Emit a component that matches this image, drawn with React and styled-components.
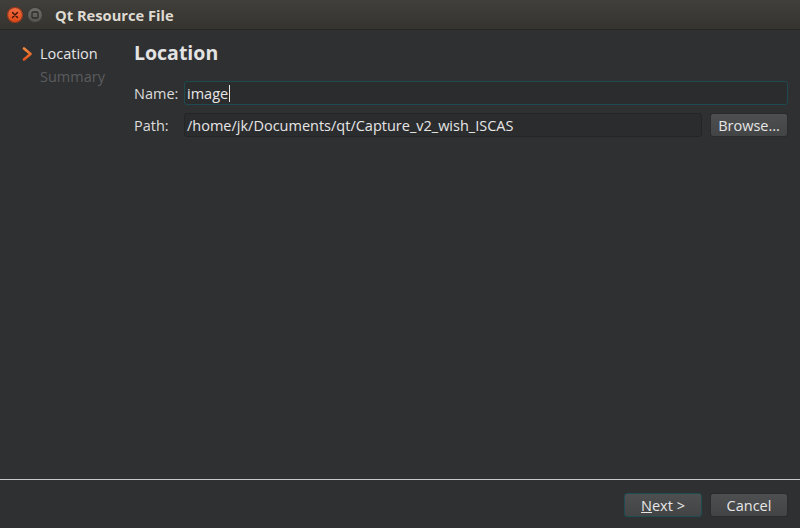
import styled, { createGlobalStyle } from "styled-components";

const Global = createGlobalStyle`
  html, body { margin: 0; padding: 0; background: #2f3032; }
  body { font-family: "Open Sans", "DejaVu Sans", sans-serif; }
`;

const Window = styled.div`
  width: 800px;
  height: 528px;
  display: flex;
  flex-direction: column;
  background: #2f3032;
  color: #dcdcdc;
  font-size: 14.5px;
`;

const TitleBar = styled.div`
  height: 29px;
  flex: none;
  display: flex;
  align-items: center;
  padding-left: 8px;
  background: linear-gradient(#403f3b, #35342f);
  border-bottom: 1px solid #262624;
`;

const WinButton = styled.div`
  width: 14px;
  height: 14px;
  border-radius: 50%;
  margin-right: 6px;
  display: flex;
  align-items: center;
  justify-content: center;
  background: ${(p) => (p.$close ? "linear-gradient(#f36c40, #df4a16)" : "linear-gradient(#6d6c68, #55544f)")};
  box-shadow: 0 0 0 1px ${(p) => (p.$close ? "#a8391a" : "#3a3935")};
`;

const Title = styled.div`
  margin-left: 7px;
  font-weight: 700;
  font-size: 14.7px;
  color: #dfdbd2;
`;

const Body = styled.div`
  flex: 1;
  display: flex;
  padding: 10px 12px 0 22px;
`;

const Sidebar = styled.div`
  width: 112px;
  flex: none;
  display: flex;
  flex-direction: column;
  gap: 4px;
  padding-top: 4px;
`;

const Step = styled.div`
  display: flex;
  align-items: center;
  height: 19px;
  color: ${(p) => (p.$active ? "#e6e6e6" : "#5b5c5e")};
  font-size: 14.5px;
`;

const Marker = styled.span`
  width: 18px;
  display: inline-flex;
  align-items: center;
`;

const Content = styled.div`
  flex: 1;
  display: flex;
  flex-direction: column;
`;

const Heading = styled.div`
  font-size: 19.5px;
  font-weight: 700;
  color: #e3e3e3;
  height: 26px;
  line-height: 26px;
  margin-bottom: 15px;
`;

const FormGrid = styled.div`
  display: grid;
  grid-template-columns: 42px 1fr auto;
  row-gap: 8px;
  column-gap: 8px;
  align-items: center;
`;

const Label = styled.div`
  color: #dcdcdc;
  font-size: 14.5px;
`;

const Field = styled.div`
  box-sizing: border-box;
  height: 24px;
  border: 1px solid ${(p) => (p.$focus ? "#1d4b4f" : "#242526")};
  border-radius: 3px;
  background: #2b2c2e;
  display: flex;
  align-items: center;
  padding-left: 2px;
  font-size: 14.5px;
  color: #e6e6e6;
  grid-column: ${(p) => (p.$span ? "2 / 4" : "auto")};
`;

const Caret = styled.span`
  display: inline-block;
  width: 1px;
  height: 17px;
  background: #e6e6e6;
  margin-left: 1px;
`;

const Button = styled.button`
  box-sizing: border-box;
  width: 78px;
  height: 24px;
  border-radius: 3px;
  border: 1px solid ${(p) => (p.$default ? "#1e4d51" : "#2a2b2c")};
  background: linear-gradient(#4e4f51, #434446);
  color: #e6e6e6;
  font-family: inherit;
  font-size: 14.5px;
  padding: 0;
  cursor: default;
`;

const Separator = styled.div`
  height: 1px;
  background: #c9c9c9;
  flex: none;
`;

const Footer = styled.div`
  height: 48px;
  flex: none;
  display: flex;
  justify-content: flex-end;
  align-items: flex-start;
  gap: 8px;
  padding-right: 12px;
  padding-top: 13px;
  box-sizing: border-box;
`;

const Underline = styled.span`
  text-decoration: underline;
`;

function Chevron() {
  return (
    <svg width="11" height="14" viewBox="0 0 11 14">
      <defs>
        <linearGradient id="chev" x1="0" y1="0" x2="0" y2="1">
          <stop offset="0" stopColor="#f4873b" />
          <stop offset="1" stopColor="#e0541d" />
        </linearGradient>
      </defs>
      <path d="M2 1.5 L8.5 7 L2 12.5" fill="none" stroke="url(#chev)" strokeWidth="2.6" strokeLinecap="round" strokeLinejoin="round" />
    </svg>
  );
}

export default function App() {
  return (
    <>
      <Global />
      <Window>
        <TitleBar>
          <WinButton $close>
            <svg width="8" height="8" viewBox="0 0 8 8">
              <path d="M1.5 1.5 L6.5 6.5 M6.5 1.5 L1.5 6.5" stroke="#3b1206" strokeWidth="1.4" strokeLinecap="round" />
            </svg>
          </WinButton>
          <WinButton>
            <svg width="8" height="8" viewBox="0 0 8 8">
              <rect x="1" y="1" width="6" height="6" rx="1" fill="none" stroke="#2e2d2a" strokeWidth="1.3" />
            </svg>
          </WinButton>
          <Title>Qt Resource File</Title>
        </TitleBar>
        <Body>
          <Sidebar>
            <Step $active>
              <Marker>
                <Chevron />
              </Marker>
              Location
            </Step>
            <Step>
              <Marker />
              Summary
            </Step>
          </Sidebar>
          <Content>
            <Heading>Location</Heading>
            <FormGrid>
              <Label>Name:</Label>
              <Field $focus $span>
                image
                <Caret />
              </Field>
              <Label>Path:</Label>
              <Field>/home/jk/Documents/qt/Capture_v2_wish_ISCAS</Field>
              <Button>Browse...</Button>
            </FormGrid>
          </Content>
        </Body>
        <Separator />
        <Footer>
          <Button $default>
            <Underline>N</Underline>ext &gt;
          </Button>
          <Button>Cancel</Button>
        </Footer>
      </Window>
    </>
  );
}
